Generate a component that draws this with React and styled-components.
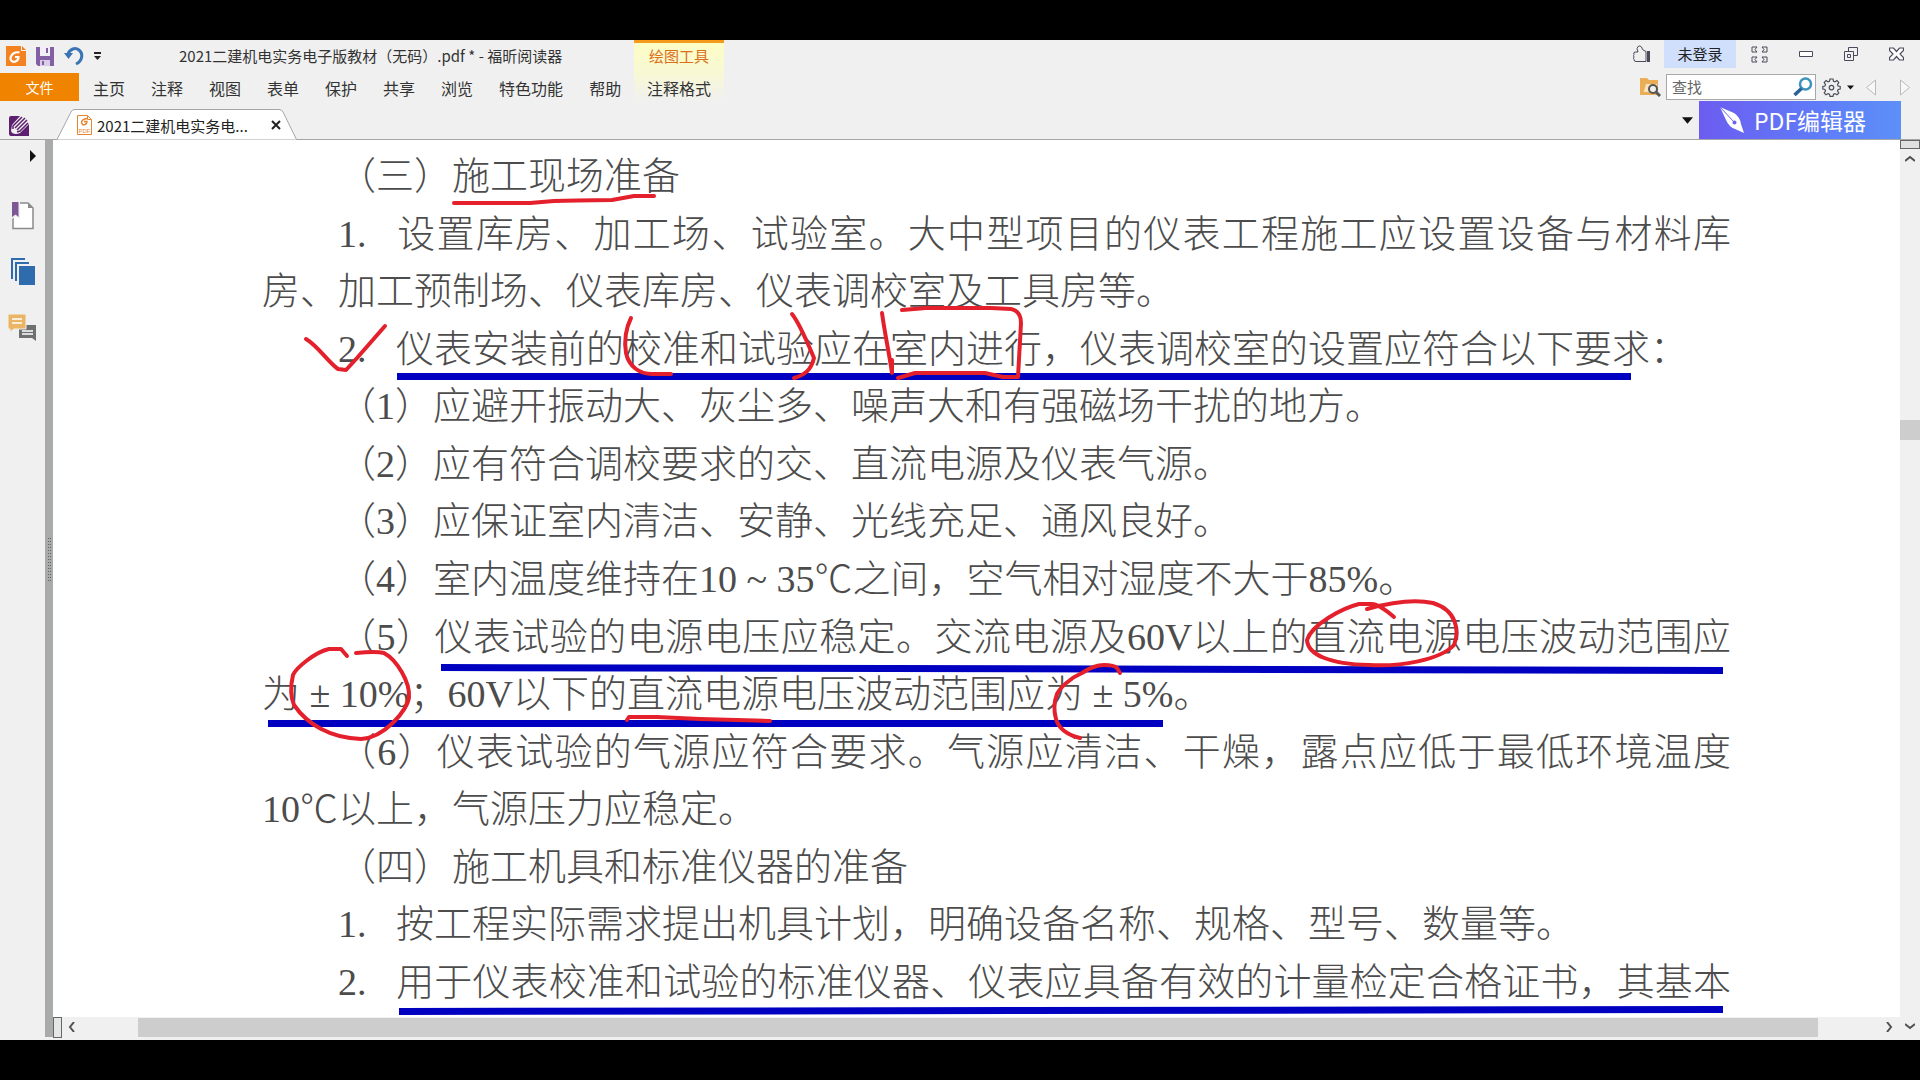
import React, { useState } from "react";
import styled, { createGlobalStyle } from "styled-components";

const GlobalStyle = createGlobalStyle`
  * {
    box-sizing: border-box;
  }
  body {
    margin: 0;
    background: #000;
    font-family: "Noto Sans CJK SC", sans-serif;
    color: #333;
  }
  button {
    border: 0;
    padding: 0;
    background: none;
    font: inherit;
    color: inherit;
    cursor: pointer;
  }
  svg {
    display: block;
    flex: none;
  }
`;

const Screen = styled.div`
  height: 100vh;
  padding: 40px 0;
  background: #000;
`;

const Window = styled.div`
  display: flex;
  flex-direction: column;
  height: 100%;
  background: #f0f0f0;
`;

const Header = styled.header`
  display: flex;
  justify-content: space-between;
  height: 100px;
  border-bottom: 1px solid #a5a7a7;
`;

const HeaderLeft = styled.div`
  display: flex;
  flex-direction: column;
`;

const HeaderRight = styled.div`
  display: flex;
  flex-direction: column;
  align-items: flex-end;
`;

const TitleRow = styled.div`
  display: flex;
  height: 33px;
  padding-left: 6px;
`;

const QuickTools = styled.div`
  display: flex;
  align-items: center;
  gap: 10px;
  width: 173px;
`;

const Title = styled.h1`
  margin: 0;
  width: 455px;
  font-size: 15px;
  font-weight: 400;
  line-height: 32px;
  white-space: nowrap;
`;

const ContextTitle = styled.div`
  width: 90px;
  border-top: 3px solid #f59a1b;
  background: linear-gradient(#fdfdc6, #f8f8d4);
  color: #d9701a;
  font-size: 15px;
  line-height: 26px;
  text-align: center;
`;

const MenuRow = styled.nav`
  display: flex;
  height: 28px;
`;

const FileButton = styled.button`
  width: 79px;
  margin-right: 14px;
  background: #f08300;
  color: #fff;
  font-size: 14px;
`;

const MenuList = styled.div`
  display: flex;
  gap: 26px;
  width: 541px;
`;

const MenuButton = styled.button`
  font-size: 16px;
  line-height: 30px;
  white-space: nowrap;
`;

const ContextButton = styled(MenuButton)`
  width: 90px;
  background: linear-gradient(#f8f8d4, #f0f0f0);
`;

const TabRow = styled.div`
  display: flex;
  align-items: flex-end;
  height: 39px;
  padding-left: 9px;
`;

const HomeButton = styled.button`
  margin-bottom: 3px;
`;

const TabShape = styled.div`
  position: relative;
  width: 240px;
  height: 31px;
  margin: 0 0 -1px 28px;
`;

const TabOutline = styled.svg`
  position: absolute;
  inset: 0;
`;

const TabContent = styled.div`
  position: relative;
  display: flex;
  align-items: center;
  gap: 5px;
  height: 100%;
  padding: 1px 16px 0 20px;
  font-size: 15px;
  color: #222;
`;

const TabName = styled.span`
  flex: 1;
  white-space: nowrap;
`;

const WindowRow = styled.div`
  display: flex;
  align-items: center;
  height: 28px;
  padding-right: 16px;
`;

const LoginButton = styled.button`
  width: 72px;
  height: 28px;
  margin: 0 15px 0 13px;
  background: #cfdffc;
  color: #222;
  font-size: 15px;
  line-height: 28px;
`;

const WindowButtons = styled.div`
  display: flex;
  gap: 31px;
`;

const SearchRow = styled.div`
  display: flex;
  align-items: center;
  height: 33px;
  padding: 5px 10px 0 0;
`;

const SearchBox = styled.label`
  display: flex;
  align-items: center;
  width: 150px;
  height: 26px;
  margin: 0 6px 0 5px;
  padding: 0 2px 0 5px;
  border: 1px solid #a6a8aa;
  background: #fff;
`;

const SearchInput = styled.input`
  flex: 1;
  min-width: 0;
  border: 0;
  padding: 0;
  outline: 0;
  font-family: inherit;
  font-size: 15px;
  line-height: 20px;
  background: none;
  &::placeholder {
    color: #666;
    opacity: 1;
  }
`;

const SettingsButton = styled.button`
  display: flex;
  align-items: center;
  gap: 6px;
`;

const PageButtons = styled.div`
  display: flex;
  gap: 24px;
  margin-left: 12px;
`;

const BannerRow = styled.div`
  display: flex;
  align-items: center;
  gap: 6px;
  height: 38px;
  padding-right: 19px;
`;

const Banner = styled.button`
  display: flex;
  align-items: center;
  gap: 9px;
  width: 202px;
  height: 38px;
  padding-left: 20px;
  background: linear-gradient(90deg, #6c5cf0, #5f7cf8 60%, #5c90f8);
  color: #fff;
  font-size: 23px;
  line-height: 36px;
`;

const Body = styled.div`
  display: flex;
  flex: 1;
  min-height: 0;
`;

const Sidebar = styled.aside`
  display: flex;
  flex-direction: column;
  align-items: center;
  width: 45px;
  padding-top: 10px;
`;

const SideButton = styled.button`
  margin-top: ${(props) => props.$space || 0}px;
  align-self: ${(props) => props.$align || "center"};
`;

const Splitter = styled.div`
  display: flex;
  align-items: center;
  justify-content: center;
  width: 8px;
  margin-bottom: 3px;
  padding-bottom: 57px;
  background: #a9abab;
`;

const Viewer = styled.main`
  display: flex;
  flex-direction: column;
  flex: 1;
  min-width: 0;
`;

const Page = styled.div`
  position: relative;
  display: flex;
  flex-direction: column;
  justify-content: space-between;
  flex: 1;
  min-height: 0;
  padding: 7px 169px 7px 209px;
  overflow: hidden;
  background: #fff;
`;

const Line = styled.p`
  height: 58px;
  margin: 0 0 -1px;
  padding-left: ${(props) => (props.$flush ? 0 : 76)}px;
  color: #4c4c4c;
  font-family: "Liberation Serif", "Noto Sans CJK SC", serif;
  font-size: 38px;
  font-weight: 300;
  line-height: 58px;
  white-space: nowrap;
  text-align-last: ${(props) => (props.$full ? "justify" : "left")};
  text-spacing-trim: space-all;
`;

const Marker = styled.span`
  display: inline-block;
  width: 58px;
  text-align-last: left;
`;

const Ink = styled.svg`
  position: absolute;
  top: 0;
  left: 0;
  pointer-events: none;
`;

const HorizontalBar = styled.div`
  display: flex;
  align-items: center;
  height: 23px;
  padding: 0 6px 3px 0;
`;

const HorizontalHandle = styled.div`
  width: 9px;
  height: 21px;
  margin-right: 5px;
  border: 1px solid #666;
  background: #e6e6e6;
`;

const HorizontalTrack = styled.div`
  flex: 1;
  height: 19px;
  margin: 0 66px 0 61px;
  background: #cdcdcd;
`;

const VerticalBar = styled.div`
  display: flex;
  flex-direction: column;
  align-items: center;
  width: 20px;
  padding-bottom: 9px;
`;

const VerticalHandle = styled.div`
  width: 20px;
  height: 9px;
  margin-bottom: 5px;
  border: 1px solid #666;
  background: #e0e0e0;
`;

const VerticalTrack = styled.div`
  flex: 1;
  width: 20px;
  padding-top: 256px;
`;

const VerticalThumb = styled.div`
  height: 20px;
  background: #cdcdcd;
`;

const menus = ["主页", "注释", "视图", "表单", "保护", "共享", "浏览", "特色功能", "帮助"];

const lines = [
  { text: "（三）施工现场准备" },
  {
    marker: "1.",
    text: "设置库房、加工场、试验室。大中型项目的仪表工程施工应设置设备与材料库",
    full: true,
  },
  { text: "房、加工预制场、仪表库房、仪表调校室及工具房等。", flush: true },
  {
    marker: "2.",
    text: "仪表安装前的校准和试验应在室内进行，仪表调校室的设置应符合以下要求：",
  },
  { text: "（1）应避开振动大、灰尘多、噪声大和有强磁场干扰的地方。" },
  { text: "（2）应有符合调校要求的交、直流电源及仪表气源。" },
  { text: "（3）应保证室内清洁、安静、光线充足、通风良好。" },
  { text: "（4）室内温度维持在10 ~ 35℃之间，空气相对湿度不大于85%。" },
  {
    text: "（5）仪表试验的电源电压应稳定。交流电源及60V以上的直流电源电压波动范围应",
    full: true,
  },
  { text: "为 ± 10%；60V以下的直流电源电压波动范围应为 ± 5%。", flush: true },
  {
    text: "（6）仪表试验的气源应符合要求。气源应清洁、干燥，露点应低于最低环境温度",
    full: true,
  },
  { text: "10℃以上，气源压力应稳定。", flush: true },
  { text: "（四）施工机具和标准仪器的准备" },
  { marker: "1.", text: "按工程实际需求提出机具计划，明确设备名称、规格、型号、数量等。" },
  {
    marker: "2.",
    text: "用于仪表校准和试验的标准仪器、仪表应具备有效的计量检定合格证书，其基本",
    full: true,
  },
];

const Caret = ({ size = 7 }) => (
  <svg width={size} height={size} viewBox="0 0 10 10">
    <path d="M0 2h10L5 8z" fill="#111" />
  </svg>
);

const Chevron = ({ d }) => (
  <svg width="10" height="10" viewBox="0 0 10 10">
    <path d={d} fill="none" stroke="#505050" strokeWidth="2" />
  </svg>
);

const FoxitIcon = () => (
  <svg width="20" height="20" viewBox="0 0 20 20">
    <path d="M0 0h15v5h5v15H0z" fill="#f58220" />
    <path d="M16 0l4 4h-4z" fill="#f58220" />
    <path
      d="M13.500 6.500C9 5.500 5.500 8 4.500 11.500 4 15 7 16.500 9.500 15.500c2.200-.8 3-2.500 3-4.500H9"
      fill="none"
      stroke="#fff"
      strokeWidth="2.200"
    />
  </svg>
);

const SaveIcon = () => (
  <svg width="18" height="19" viewBox="0 0 18 19">
    <path d="M0 0h18v19H2l-2-2z" fill="#8360a5" />
    <path d="M4 0h10v9H4z" fill="#f4eff7" />
    <path d="M10 1h2v5h-2z" fill="#8360a5" />
    <path d="M4 13h10v6H4z" fill="#d9cde4" />
    <path d="M6 14h2v4H6z" fill="#8360a5" />
  </svg>
);

const UndoIcon = () => (
  <svg width="20" height="20" viewBox="0 0 20 20">
    <path d="M4 8C6 3 11 1 15 4c4.500 3.500 3.500 11-3 14" fill="none" stroke="#3a74b5" strokeWidth="3" />
    <path d="M0 7h9l-4.500 6z" fill="#3a74b5" />
  </svg>
);

const QuickCaret = () => (
  <svg width="7" height="9" viewBox="0 0 7 9">
    <path d="M0 0h7v2H0zM0 4h7L3.500 8z" fill="#222" />
  </svg>
);

const PenHomeIcon = () => (
  <svg width="20" height="20" viewBox="0 0 20 20">
    <path d="M2 0h9L3 9l-1 6q1 3 5 3 4 0 6-3l7-7v12H2q-2 0-2-2V2q0-2 2-2z" fill="#5d2070" />
    <path d="M4 13V10L13 1M6 12l10-10M8 14l10-10M8 16l3-1 8-8" fill="none" stroke="#5d2070" strokeWidth="1.500" />
  </svg>
);

const PdfFileIcon = () => (
  <svg width="15" height="20" viewBox="0 0 15 20">
    <path d="M.5.5h10l4 4v15H.5z" fill="#fff" stroke="#e8852e" />
    <path d="M10.500.5v4h4" fill="none" stroke="#e8852e" />
    <path d="M10 3.500Q5 4 4.500 7.500 5 10.500 8 9.500q2-1 2-3H7" fill="none" stroke="#e8852e" strokeWidth="1.500" />
    <text x="7.500" y="18" fontSize="6" fontFamily="Liberation Sans, sans-serif" textAnchor="middle" fill="#e8852e">
      PDF
    </text>
  </svg>
);

const CloseTabIcon = () => (
  <svg width="10" height="10" viewBox="0 0 10 10">
    <path d="M1 1l8 8M9 1L1 9" stroke="#222" strokeWidth="2" />
  </svg>
);

const HandIcon = () => (
  <svg width="19" height="18" viewBox="0 0 19 18">
    <path
      d="M14 16.500H4q-2 0-2-2-1-1 0-2.500-1-1.500 0-2.500Q1 7.500 3 7h3Q4 3 6 1.500 8 0 9.500 2q0 3 4.500 4.500z"
      fill="none"
      stroke="#4a4a5a"
      strokeWidth="1"
    />
    <path d="M15 6h3v11h-3z" fill="#4a4a5a" />
  </svg>
);

const GridIcon = () => (
  <svg width="17" height="17" viewBox="0 0 17 17" fill="none" stroke="#4a4a5a">
    <path d="M1 1h5L4 3.500 6 6H1zM16 1h-5l2 2.500L11 6h5zM1 16h5l-2-2.500L6 11H1zM16 16h-5l2-2.500-2-2.500h5z" />
  </svg>
);

const MinIcon = () => (
  <svg width="14" height="14" viewBox="0 0 14 14">
    <path d="M.5 4.500h13v5H.5z" fill="#fff" stroke="#4a4a5a" />
  </svg>
);

const RestoreIcon = () => (
  <svg width="14" height="14" viewBox="0 0 14 14" fill="none" stroke="#4a4a5a">
    <path d="M4.500 4V.5h9v8H10M.5 4.500h9v9h-9zM3.500 7.500h3v3h-3z" />
  </svg>
);

const CloseIcon = () => (
  <svg width="15" height="14" viewBox="0 0 15 14">
    <path
      d="M.5 1h4l3 3.500 3-3.500h4v2.500L11 7l3.500 3.500V13h-4l-3-3.500-3 3.500h-4v-2.500L4 7 .5 3.500z"
      fill="#fff"
      stroke="#4a4a5a"
      strokeWidth="1.200"
    />
  </svg>
);

const FolderSearchIcon = () => (
  <svg width="21" height="20" viewBox="0 0 21 20">
    <path d="M0 1h7l2 2h9v15H0z" fill="#e9ae56" />
    <path d="M3 7h14v8H3z" fill="#f8e3bd" />
    <path d="M3 17L6 7H3z" fill="#e9ae56" />
    <circle cx="13" cy="12" r="4" fill="#f0f0f0" stroke="#555" strokeWidth="2" />
    <path d="M16 15l4 4" stroke="#555" strokeWidth="3" />
  </svg>
);

const MagnifierIcon = () => (
  <svg width="20" height="20" viewBox="0 0 20 20">
    <circle cx="12.500" cy="7" r="5.500" fill="#fff" stroke="#3d93bd" strokeWidth="2.500" />
    <path d="M8.500 11.500L1.500 18" stroke="#27629a" strokeWidth="3.500" />
  </svg>
);

const GearIcon = () => (
  <svg width="19" height="19" viewBox="0 0 19 19" fill="none" stroke="#4d4d5d" strokeWidth="1.200">
    <path d="M8 1h3l.5 2.200 1.500.6L15 2.600 16.800 4.600 15.500 6.500l.6 1.500 2.100.5v2.500l-2.100.5-.6 1.500 1.300 2-1.800 1.800-2-1.200-1.500.6L11 18.300H8l-.5-2.100-1.500-.6-2 1.200L2.200 15l1.300-2-.6-1.500L.8 11V8.500l2.100-.5.6-1.500-1.300-2L4 2.600l2 1.200 1.500-.6z" />
    <circle cx="9.500" cy="9.600" r="2.300" />
  </svg>
);

const PageArrow = ({ d }) => (
  <svg width="10" height="17" viewBox="0 0 10 17">
    <path d={d} fill="#f8f8f8" stroke="#b9b9bd" />
  </svg>
);

const NibIcon = () => (
  <svg width="26" height="28" viewBox="0 0 26 28">
    <path d="M1 1l14 6q6 4 7 11l3 9-9-4q-6-2-9-9z" fill="#fff" />
    <path d="M1 1l14 15" stroke="#6a62f0" strokeWidth="1" />
    <circle cx="15.500" cy="16.500" r="2" fill="#6a62f0" />
  </svg>
);

const BookmarkIcon = () => (
  <svg width="22" height="28" viewBox="0 0 22 28">
    <path d="M1 1h15l5 5v20.500H1z" fill="#fff" stroke="#8a8a8a" strokeWidth="1.500" />
    <path d="M16 1v5h5z" fill="#8a8a8a" />
    <path d="M0 0h8v17l-4-3-4 3z" fill="#f0f0f0" />
    <path d="M0 0h6.500v15l-3-2.500L0 15z" fill="#7d5795" />
  </svg>
);

const PagesIcon = () => (
  <svg width="24" height="28" viewBox="0 0 24 28">
    <path d="M1 21V1h13M5 23V5h13" fill="none" stroke="#2f6cae" strokeWidth="2" />
    <path d="M8 8h16v19H8z" fill="#2f6cae" />
  </svg>
);

const CommentsIcon = () => (
  <svg width="29" height="28" viewBox="0 0 29 28">
    <path d="M11 11h17v16l-4-3H11z" fill="#6f7070" />
    <path d="M0 0h18v15H6l-4 3v-3H0z" fill="#ebb565" stroke="#f0f0f0" strokeWidth="1" />
    <path d="M4 5h10M4 9h10M14 17h11M14 20h11" stroke="#fff" strokeWidth="1.500" />
  </svg>
);

const GripIcon = () => (
  <svg width="3" height="44" viewBox="0 0 3 44">
    <path d="M.5 0v44M2.500 0v44" stroke="#606262" strokeDasharray="1 2" />
  </svg>
);

const App = () => {
  const [keyword, setKeyword] = useState("");

  return (
    <Screen>
      <GlobalStyle />
      <Window>
        <Header>
          <HeaderLeft>
            <TitleRow>
              <QuickTools>
                <FoxitIcon />
                <button aria-label="保存">
                  <SaveIcon />
                </button>
                <button aria-label="撤销">
                  <UndoIcon />
                </button>
                <QuickCaret />
              </QuickTools>
              <Title>2021二建机电实务电子版教材（无码）.pdf * - 福昕阅读器</Title>
              <ContextTitle>绘图工具</ContextTitle>
            </TitleRow>
            <MenuRow>
              <FileButton>文件</FileButton>
              <MenuList>
                {menus.map((item) => (
                  <MenuButton key={item}>{item}</MenuButton>
                ))}
              </MenuList>
              <ContextButton>注释格式</ContextButton>
            </MenuRow>
            <TabRow>
              <HomeButton aria-label="起始页">
                <PenHomeIcon />
              </HomeButton>
              <TabShape>
                <TabOutline width="240" height="31" viewBox="0 0 240 31">
                  <path d="M0 30.500L14 3Q15 .5 18 .5H222Q225 .5 226 3L239.500 30.500" fill="#fff" stroke="#a5a7a7" />
                </TabOutline>
                <TabContent>
                  <PdfFileIcon />
                  <TabName>2021二建机电实务电...</TabName>
                  <button aria-label="关闭">
                    <CloseTabIcon />
                  </button>
                </TabContent>
              </TabShape>
            </TabRow>
          </HeaderLeft>
          <HeaderRight>
            <WindowRow>
              <HandIcon />
              <LoginButton>未登录</LoginButton>
              <WindowButtons>
                <button aria-label="全屏">
                  <GridIcon />
                </button>
                <button aria-label="最小化">
                  <MinIcon />
                </button>
                <button aria-label="还原">
                  <RestoreIcon />
                </button>
                <button aria-label="关闭窗口">
                  <CloseIcon />
                </button>
              </WindowButtons>
            </WindowRow>
            <SearchRow>
              <FolderSearchIcon />
              <SearchBox>
                <SearchInput
                  aria-label="查找"
                  placeholder="查找"
                  value={keyword}
                  onChange={(e) => setKeyword(e.target.value)}
                />
                <MagnifierIcon />
              </SearchBox>
              <SettingsButton aria-label="设置">
                <GearIcon />
                <Caret />
              </SettingsButton>
              <PageButtons>
                <button aria-label="上一个">
                  <PageArrow d="M9.500 1v15L.5 8.500z" />
                </button>
                <button aria-label="下一个">
                  <PageArrow d="M.5 1v15l9-7.500z" />
                </button>
              </PageButtons>
            </SearchRow>
            <BannerRow>
              <Caret size={11} />
              <Banner>
                <NibIcon />
                PDF编辑器
              </Banner>
            </BannerRow>
          </HeaderRight>
        </Header>

        <Body>
          <Sidebar>
            <SideButton aria-label="展开" $align="flex-end">
              <svg width="16" height="12" viewBox="0 0 16 12">
                <path d="M1 0v12l6-6z" fill="#111" />
              </svg>
            </SideButton>
            <SideButton aria-label="书签" $space={40}>
              <BookmarkIcon />
            </SideButton>
            <SideButton aria-label="页面" $space={28}>
              <PagesIcon />
            </SideButton>
            <SideButton aria-label="注释" $space={28}>
              <CommentsIcon />
            </SideButton>
          </Sidebar>
          <Splitter>
            <GripIcon />
          </Splitter>
          <Viewer>
            <Page>
              {lines.map((line) => (
                <Line key={line.text} $full={line.full} $flush={line.flush}>
                  {line.marker && <Marker>{line.marker}</Marker>}
                  {line.text}
                </Line>
              ))}
              <Ink width="1847" height="877" viewBox="53 140 1847 877" fill="none">
                <g stroke="#0000c0" strokeWidth="7">
                  <path d="M397 376.500H1631" />
                  <path d="M441 667.500L1723 670.500" />
                  <path d="M268 723.500H1163" />
                  <path d="M399 1011.500L1723 1009.500" />
                </g>
                <g stroke="#e3202b" strokeWidth="4" strokeLinecap="round" strokeLinejoin="round">
                  <path d="M454 203H530L554 201 577 200.500 612 200 634 196H654" />
                  <path d="M306 339C318 346 328 362 338 369L346 370 357 358 385 326" />
                  <path d="M631 318C626 328 624 340 626 353 629 367 640 374 652 374H671" />
                  <path d="M792 314C800 324 808 344 814 358 811 370 805 375 794 378" />
                  <path d="M882 313C885 335 889 352 892 373V360" />
                  <path d="M902 310L926 308H991L1011 309Q1021 311 1021 323L1018 377H1003L985 373H915L898 378" />
                  <path d="M1394 617C1387 611 1378 604 1372 604H1359C1343 608 1312 624 1307 640 1308 655 1330 664 1369 665 1400 667 1440 660 1454 645 1460 630 1456 610 1433 603 1410 598 1385 604 1367 609" />
                  <path d="M347 656L341 649H329C315 652 296 668 293 675 290 688 291 698 294 705 307 724 330 738 361 739 384 738 408 710 409 697 410 682 397 660 384 653 376 651 366 652 356 653" />
                  <path d="M627 720L629 717H657L700 719 770 721" />
                  <path d="M1120 673L1117 668Q1114 665 1104 665C1095 665 1088 669 1082 673 1070 678 1060 688 1057 694 1054 702 1054 712 1056 719 1059 730 1068 735 1080 738" />
                </g>
              </Ink>
            </Page>
            <HorizontalBar>
              <HorizontalHandle />
              <Chevron d="M7 0L3 5l4 5" />
              <HorizontalTrack />
              <Chevron d="M3 0l4 5-4 5" />
            </HorizontalBar>
          </Viewer>
          <VerticalBar>
            <VerticalHandle />
            <Chevron d="M0 7l5-4 5 4" />
            <VerticalTrack>
              <VerticalThumb />
            </VerticalTrack>
            <Chevron d="M0 3l5 4 5-4" />
          </VerticalBar>
        </Body>
      </Window>
    </Screen>
  );
};

export default App;
